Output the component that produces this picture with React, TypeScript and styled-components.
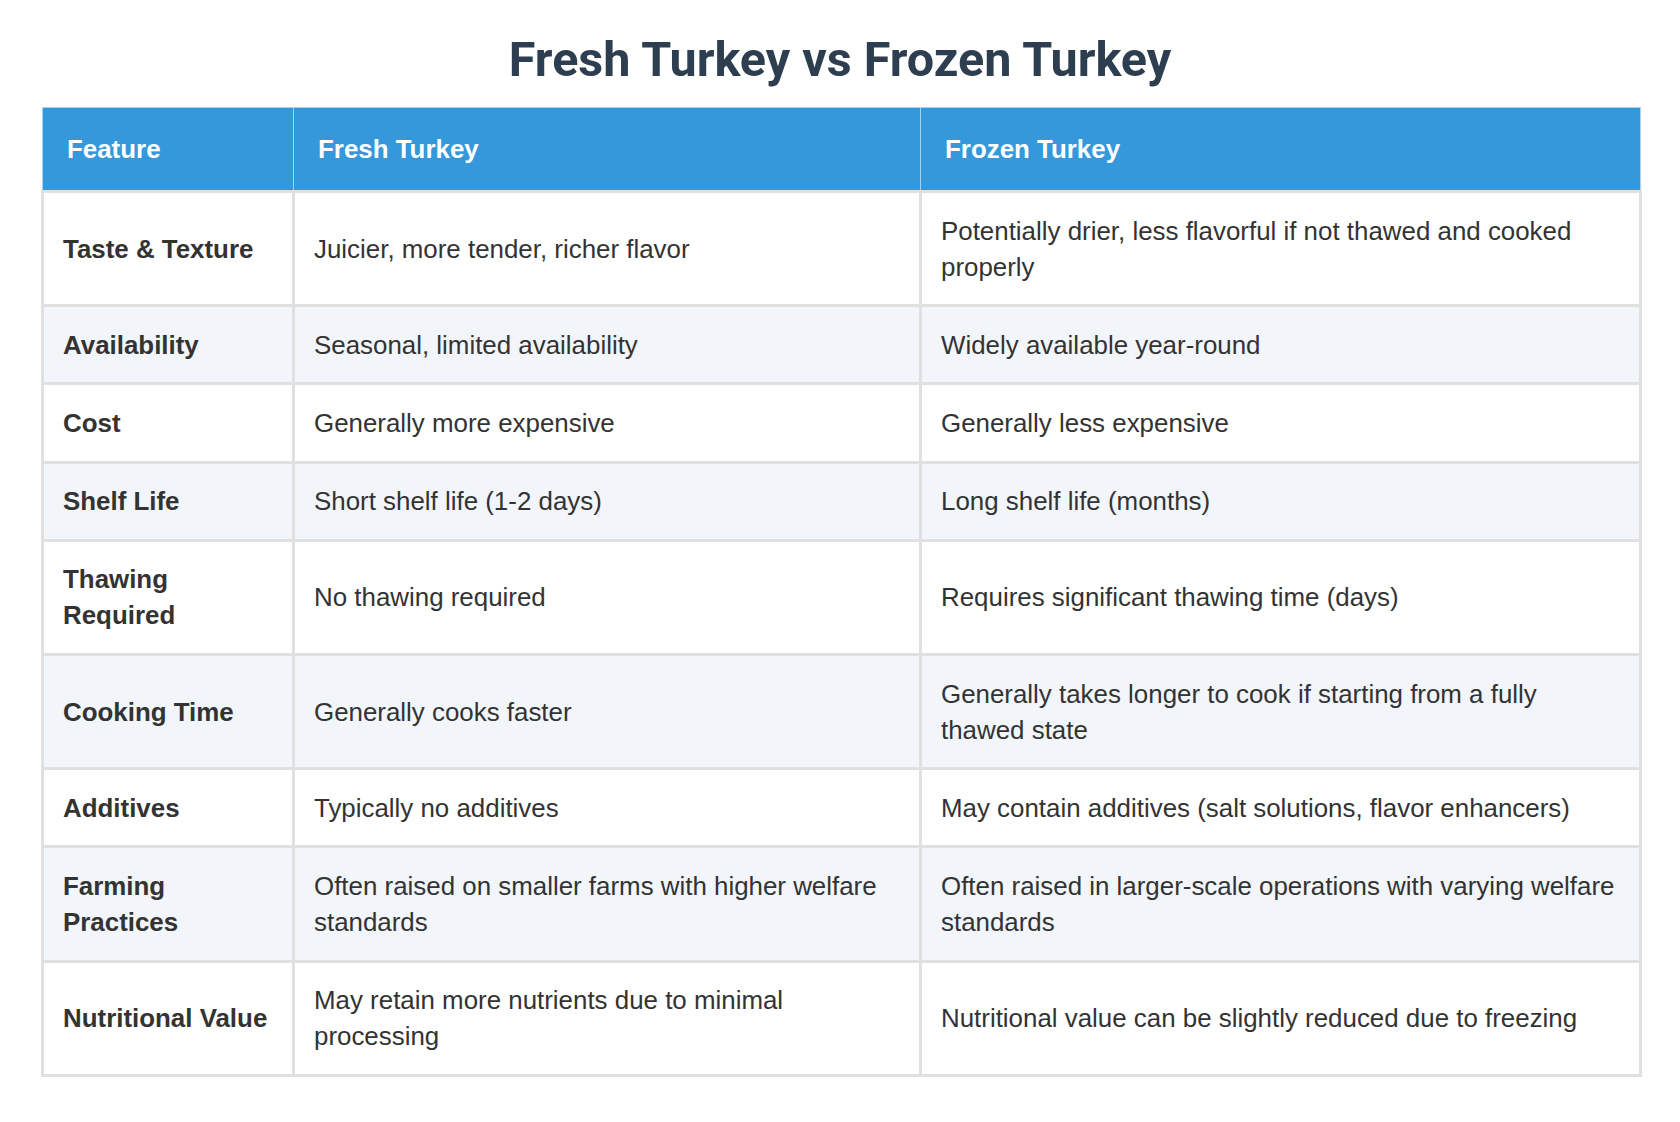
import React from "react";
import styled, { createGlobalStyle } from "styled-components";

const rows = [
  {
    feature: "Taste & Texture",
    fresh: "Juicier, more tender, richer flavor",
    frozen: "Potentially drier, less flavorful if not thawed and cooked properly",
  },
  {
    feature: "Availability",
    fresh: "Seasonal, limited availability",
    frozen: "Widely available year-round",
  },
  {
    feature: "Cost",
    fresh: "Generally more expensive",
    frozen: "Generally less expensive",
  },
  {
    feature: "Shelf Life",
    fresh: "Short shelf life (1-2 days)",
    frozen: "Long shelf life (months)",
  },
  {
    feature: "Thawing Required",
    fresh: "No thawing required",
    frozen: "Requires significant thawing time (days)",
  },
  {
    feature: "Cooking Time",
    fresh: "Generally cooks faster",
    frozen: "Generally takes longer to cook if starting from a fully thawed state",
  },
  {
    feature: "Additives",
    fresh: "Typically no additives",
    frozen: "May contain additives (salt solutions, flavor enhancers)",
  },
  {
    feature: "Farming Practices",
    fresh: "Often raised on smaller farms with higher welfare standards",
    frozen: "Often raised in larger-scale operations with varying welfare standards",
  },
  {
    feature: "Nutritional Value",
    fresh: "May retain more nutrients due to minimal processing",
    frozen: "Nutritional value can be slightly reduced due to freezing",
  },
];

const App = () => (
  <>
    <GlobalStyle />
    <Page>
      <Title>Fresh Turkey vs Frozen Turkey</Title>
      <Table>
        <colgroup>
          <Col width={251} />
          <Col width={627} />
          <Col width={720} />
        </colgroup>
        <thead>
          <tr>
            <HeadCell>Feature</HeadCell>
            <HeadCell>Fresh Turkey</HeadCell>
            <HeadCell>Frozen Turkey</HeadCell>
          </tr>
        </thead>
        <tbody>
          {rows.map((row) => (
            <Row key={row.feature}>
              <Cell $feature>{row.feature}</Cell>
              <Cell>{row.fresh}</Cell>
              <Cell>{row.frozen}</Cell>
            </Row>
          ))}
        </tbody>
      </Table>
    </Page>
  </>
);

export default App;

const GlobalStyle = createGlobalStyle`
  body {
    margin: 0;
    background: #ffffff;
    font-family: "Liberation Sans", Arial, sans-serif;
  }
`;

const Page = styled.div`
  padding: 32px 41px 40px 41px;
`;

const Title = styled.h1`
  margin: 0 0 19px;
  text-align: center;
  font-family: Roboto, "Liberation Sans", sans-serif;
  font-weight: 700;
  font-size: 48.5px;
  line-height: 56px;
  color: #2c3e50;
`;

const Table = styled.table`
  width: 100%;
  border-collapse: collapse;
  table-layout: fixed;
  font-size: 25.9px;
  line-height: 36px;
`;

const Col = styled.col<{ width: number }>`
  width: ${({ width }) => width}px;
`;

const HeadCell = styled.th`
  padding: 23px 24px;
  text-align: left;
  font-weight: 700;
  color: #ffffff;
  background: #3498db;
  border: 1px solid #a9d2f2;
`;

const Row = styled.tr`
  background: #ffffff;

  &:nth-child(even) {
    background: #f2f5f9;
  }
`;

const Cell = styled.td<{ $feature?: boolean }>`
  padding: 19.6px 19px;
  color: #333333;
  font-weight: ${({ $feature }) => ($feature ? 700 : 400)};
  border: 3px solid #e0e0e0;
  vertical-align: middle;
`;
